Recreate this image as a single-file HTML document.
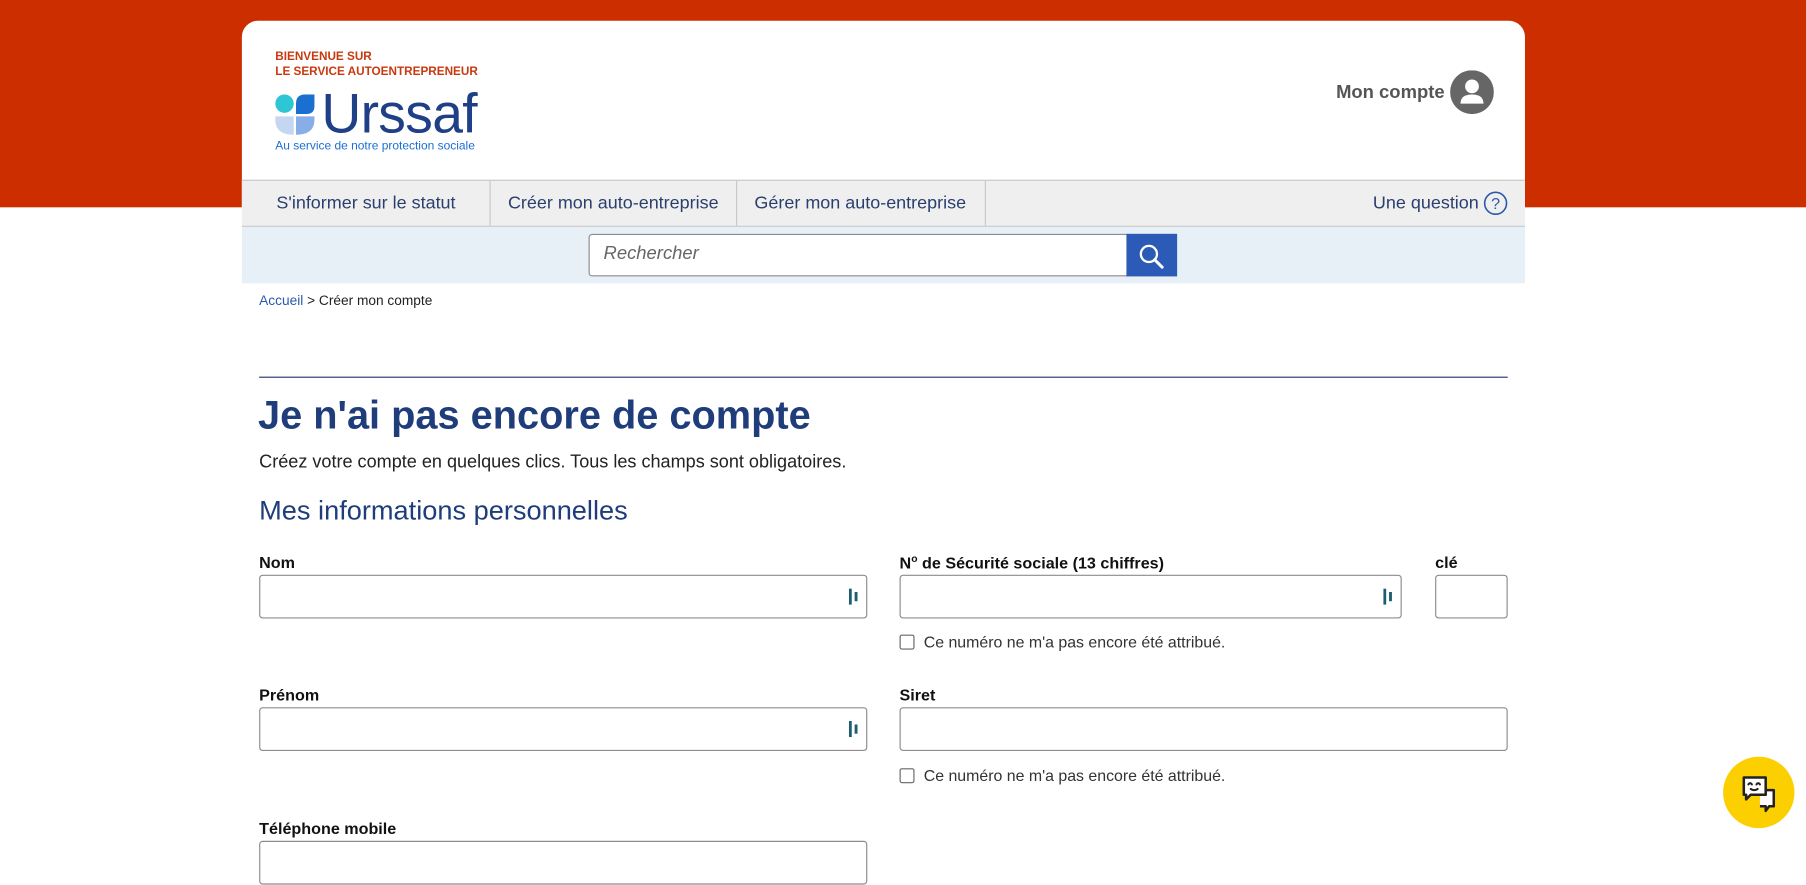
<!DOCTYPE html>
<html><head><meta charset="utf-8"><style>
html,body{margin:0;padding:0;width:1806px;height:851px;overflow:hidden;background:#fff;font-family:"Liberation Sans",Arial,sans-serif}
#w{position:absolute;left:0;top:0;width:1568px;height:739px;transform:scale(1.15179);transform-origin:0 0}
.a{position:absolute}
.red{left:0;top:0;width:1568px;height:180px;background:#cc2e00}
.card{left:210px;top:18px;width:1114px;height:721px;background:#fff;border-radius:14px 14px 0 0}
.nav{left:210px;top:156px;width:1114px;height:39px;background:#efefef;border-top:1px solid #c8c8c8;border-bottom:1px solid #c8c8c8}
.nav span{position:absolute;top:11px;font-size:15.6px;color:#2a3f6e}
.sep{position:absolute;top:0;width:1px;height:39px;background:#c8c8c8}
.srch{left:210px;top:197px;width:1114px;height:49px;background:#e8f0f7}
.inp{position:absolute;background:#fff;border:1px solid #8c8c8c;border-radius:3px;box-sizing:border-box}
.lab{position:absolute;font-size:14px;font-weight:bold;color:#111}
.chk{position:absolute;font-size:13.8px;color:#333}
.chk i{display:inline-block;width:11px;height:11px;border:1px solid #666;border-radius:2px;vertical-align:-2px;margin-right:8px}
.lp{position:absolute;right:5px;top:11px;width:10px;height:14px}
</style></head><body><div id="w">
<div class="a red"></div>
<div class="a card"></div>
<div class="a" style="left:239px;top:43px;font-size:10.2px;font-weight:bold;color:#c9390f;line-height:13px">BIENVENUE SUR<br>LE SERVICE AUTOENTREPRENEUR</div>
<svg class="a" style="left:239px;top:82px" width="36" height="36" viewBox="0 0 36 36">
<circle cx="8" cy="8" r="8" fill="#2ec6d4"/>
<path d="M18 17 V8 Q18 0 26 0 H34 V10 Q34 17 27 17Z" fill="#1b6fd1"/>
<path d="M0 19 H16 V35 Q0 35 0 22Z" fill="#c5d6f2"/>
<path d="M18 19 H34 V22 Q34 35 18 35Z" fill="#88aee8"/>
</svg>
<div class="a" style="left:279px;top:72px;font-size:48px;color:#1f3f86;letter-spacing:-0.6px">Urssaf</div>
<div class="a" style="left:239px;top:122px;font-size:10.4px;color:#1b6fd1">Au service de notre protection sociale</div>
<div class="a" style="left:1160px;top:72px;font-size:16px;font-weight:bold;color:#555">Mon compte</div>
<svg class="a" style="left:1259px;top:61px" width="38" height="38" viewBox="0 0 38 38"><circle cx="19" cy="19" r="19" fill="#666"/><circle cx="19" cy="14" r="6" fill="#fff"/><path d="M9 29 Q9 21 19 21 Q29 21 29 29 Z" fill="#fff"/></svg>
<div class="a nav">
<span style="left:30px">S'informer sur le statut</span>
<div class="sep" style="left:215px"></div>
<span style="left:231px">Créer mon auto-entreprise</span>
<div class="sep" style="left:429px"></div>
<span style="left:445px">Gérer mon auto-entreprise</span>
<div class="sep" style="left:645px"></div>
<span style="left:982px">Une question</span>
<svg style="position:absolute;left:1078px;top:9px" width="21" height="21" viewBox="0 0 21 21"><circle cx="10.5" cy="10.5" r="9.5" fill="none" stroke="#2a5aa8" stroke-width="1.4"/><text x="10.5" y="15.5" text-anchor="middle" font-size="14" fill="#2a5aa8" font-family="Liberation Sans">?</text></svg>
</div>
<div class="a srch"></div>
<div class="inp" style="left:511px;top:203px;width:468px;height:37px;border-radius:3px 0 0 3px"></div>
<div class="a" style="left:524px;top:212px;font-size:16px;font-style:italic;color:#666">Rechercher</div>
<div class="a" style="left:978px;top:203px;width:44px;height:37px;background:#2b5bb6"></div>
<svg class="a" style="left:988px;top:211px" width="24" height="24" viewBox="0 0 24 24"><circle cx="9.5" cy="9.5" r="7" fill="none" stroke="#fff" stroke-width="2"/><path d="M14.5 14.5 L21 21" stroke="#fff" stroke-width="2.6" stroke-linecap="round"/></svg>
<div class="a" style="left:225px;top:254px;font-size:11.9px;color:#222"><span style="color:#2a5aa8">Accueil</span> &gt; Créer mon compte</div>
<div class="a" style="left:225px;top:327px;width:1084px;height:1px;background:#1e3a6e"></div>
<div class="a" style="left:224px;top:342px;font-size:34.5px;font-weight:bold;color:#1f3d7a">Je n'ai pas encore de compte</div>
<div class="a" style="left:225px;top:393px;font-size:15.7px;color:#222">Créez votre compte en quelques clics. Tous les champs sont obligatoires.</div>
<div class="a" style="left:225px;top:431px;font-size:23.6px;color:#1f3d7a">Mes informations personnelles</div>
<div class="lab" style="left:225px;top:480px">Nom</div>
<div class="lab" style="left:781px;top:480px">N<sup style="font-size:9px">o</sup> de Sécurité sociale (13 chiffres)</div>
<div class="lab" style="left:1246px;top:480px">clé</div>
<div class="inp" style="left:225px;top:499px;width:528px;height:38px"><svg class="lp" viewBox="0 0 10 14"><rect x="0" y="0" width="2.5" height="14" fill="#1c5e6e"/><rect x="5" y="3" width="2.5" height="8" fill="#1c5e6e"/></svg></div>
<div class="inp" style="left:781px;top:499px;width:436px;height:38px"><svg class="lp" viewBox="0 0 10 14"><rect x="0" y="0" width="2.5" height="14" fill="#1c5e6e"/><rect x="5" y="3" width="2.5" height="8" fill="#1c5e6e"/></svg></div>
<div class="inp" style="left:1246px;top:499px;width:63px;height:38px"></div>
<div class="chk" style="left:781px;top:550px"><i></i>Ce numéro ne m'a pas encore été attribué.</div>
<div class="lab" style="left:225px;top:595px">Prénom</div>
<div class="lab" style="left:781px;top:595px">Siret</div>
<div class="inp" style="left:225px;top:614px;width:528px;height:38px"><svg class="lp" viewBox="0 0 10 14"><rect x="0" y="0" width="2.5" height="14" fill="#1c5e6e"/><rect x="5" y="3" width="2.5" height="8" fill="#1c5e6e"/></svg></div>
<div class="inp" style="left:781px;top:614px;width:528px;height:38px"></div>
<div class="chk" style="left:781px;top:666px"><i></i>Ce numéro ne m'a pas encore été attribué.</div>
<div class="lab" style="left:225px;top:711px">Téléphone mobile</div>
<div class="inp" style="left:225px;top:730px;width:528px;height:38px"></div>
<svg class="a" style="left:1495px;top:656px" width="64" height="64" viewBox="0 0 64 64"><circle cx="32" cy="32" r="31" fill="#fccf00"/>
<path d="M33 30 h12 v14 h-4 l-3 4 v-4 h-5" fill="#fff" stroke="#222" stroke-width="2.2" stroke-linejoin="round"/>
<path d="M19 19 h19 v15 h-13 l-4 4 v-4 h-2 z" fill="#fff" stroke="#222" stroke-width="2.2" stroke-linejoin="round"/>
<path d="M23 25 q1.5-2 3 0 M30 25 q1.5-2 3 0 M25 29 q3 2 6 0" fill="none" stroke="#222" stroke-width="1.8" stroke-linecap="round"/></svg>
</div></body></html>
